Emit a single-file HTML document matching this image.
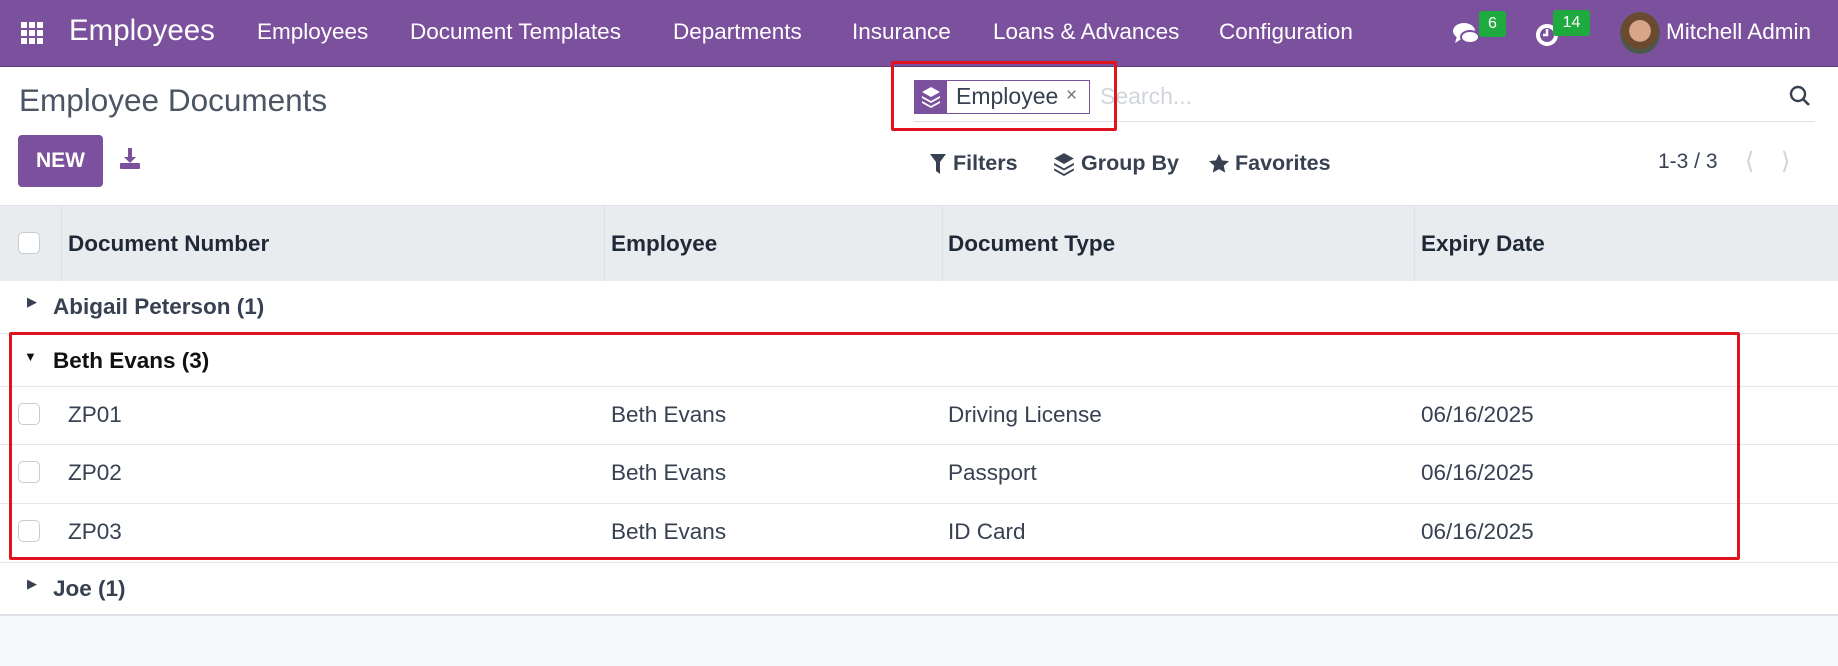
<!DOCTYPE html>
<html><head><meta charset="utf-8"><style>
*{box-sizing:border-box;margin:0;padding:0}
body{width:1838px;height:666px;overflow:hidden;background:#f8f9fa;font-family:"Liberation Sans",sans-serif;color:#374151;position:relative}
.a{position:absolute;white-space:nowrap}
.nav{position:absolute;left:0;top:0;width:1838px;height:67px;background:#7b519d;border-bottom:1px solid #5e3c7b}
.nav .a{color:#fff;font-size:22.5px;top:19px}
.ctrl{position:absolute;left:0;top:67px;width:1838px;height:138px;background:#fff}
.th{position:absolute;left:0;top:205px;width:1838px;height:76px;background:#e9ecef;border-top:1px solid #dee2e6}
.row{position:absolute;left:0;width:1838px;background:#fff;border-bottom:1px solid #e5e7eb}
.cb{position:absolute;left:18px;width:22px;height:22px;border:1px solid #c7ccd1;border-radius:5px;background:#fff}
.t{font-size:22.5px;color:#374151}
.b{font-weight:bold;color:#1f2937}
.sep{position:absolute;top:205px;width:1px;height:76px;background:#dcdfe3}
</style></head><body>
<div class="nav">
 <svg class="a" style="left:21px;top:22px" width="22" height="22" viewBox="0 0 22 22" fill="#fff"><rect x="0" y="0" width="6" height="6"/><rect x="8" y="0" width="6" height="6"/><rect x="16" y="0" width="6" height="6"/><rect x="0" y="8" width="6" height="6"/><rect x="8" y="8" width="6" height="6"/><rect x="16" y="8" width="6" height="6"/><rect x="0" y="16" width="6" height="6"/><rect x="8" y="16" width="6" height="6"/><rect x="16" y="16" width="6" height="6"/></svg>
 <div class="a" style="left:69px;top:14px;font-size:29.5px">Employees</div>
 <div class="a" style="left:257px">Employees</div>
 <div class="a" style="left:410px">Document Templates</div>
 <div class="a" style="left:673px">Departments</div>
 <div class="a" style="left:852px">Insurance</div>
 <div class="a" style="left:993px">Loans &amp; Advances</div>
 <div class="a" style="left:1219px">Configuration</div>
 <svg class="a" style="left:1452px;top:20px" width="30" height="28" viewBox="0 0 30 28" fill="#fff"><ellipse cx="12" cy="11" rx="11" ry="8"/><path d="M5 16 L3 23 L11 18Z"/><ellipse cx="18" cy="17" rx="9" ry="6" fill="#fff" stroke="#7b519d" stroke-width="2"/></svg>
 <div class="a" style="left:1479px;top:11px;width:27px;height:26px;background:#1faa3f;border-radius:3px;font-size:16px;text-align:center;line-height:26px">6</div>
 <svg class="a" style="left:1535px;top:23px" width="24" height="24" viewBox="0 0 24 24"><circle cx="12" cy="12" r="9" fill="none" stroke="#fff" stroke-width="4"/><path d="M12 6V12H8" stroke="#fff" stroke-width="2.5" fill="none"/></svg>
 <div class="a" style="left:1553px;top:10px;width:37px;height:26px;background:#1faa3f;border-radius:3px;font-size:16px;text-align:center;line-height:26px">14</div>
 <div class="a" style="left:1620px;top:12px;width:40px;height:42px;border-radius:50%;background:radial-gradient(circle at 50% 45%,#d9a58a 0 35%,#6b4a32 36% 60%,#4a5a4a 61%)"></div>
 <div class="a" style="left:1666px">Mitchell Admin</div>
</div>
<div class="ctrl">
 <div class="a" style="left:19px;top:15px;font-size:31.5px;color:#4b5563">Employee Documents</div>
 <div class="a" style="left:18px;top:68px;width:85px;height:52px;background:#7b519d;border-radius:4px;color:#fff;font-size:21px;font-weight:bold;text-align:center;line-height:52px">NEW</div>
 <svg class="a" style="left:119px;top:81px" width="22" height="22" viewBox="0 0 22 22" fill="#7b519d"><path d="M9 0h4v9h4l-6 6-6-6h4z"/><rect x="1" y="15" width="20" height="6" rx="1"/></svg>
 <div class="a" style="left:914px;top:13px;width:176px;height:34px;border:1px solid #7b519d;background:#fff"></div>
 <div class="a" style="left:914px;top:13px;width:33px;height:34px;background:#7b519d"></div>
 <svg class="a" style="left:921px;top:19px" width="20" height="22" viewBox="0 0 20 22" fill="#fff"><path d="M10 1 L19 6 L10 11 L1 6Z"/><path d="M1 10 L10 15 L19 10 V12 L10 17 L1 12Z"/><path d="M1 15 L10 20 L19 15 V17 L10 22 L1 17Z"/></svg>
 <div class="a" style="left:956px;top:16px;font-size:23px;color:#374151">Employee</div>
 <div class="a" style="left:1066px;top:18px;font-size:19px;color:#6b7280">×</div>
 <div class="a" style="left:1100px;top:16px;font-size:23px;color:#d1d5db">Search...</div>
 <div class="a" style="left:914px;top:54px;width:901px;height:1px;background:#dee2e6"></div>
 <svg class="a" style="left:1788px;top:17px" width="24" height="24" viewBox="0 0 24 24"><circle cx="10" cy="10" r="7" fill="none" stroke="#374151" stroke-width="2.4"/><path d="M15 15L21 21" stroke="#374151" stroke-width="2.6"/></svg>
 <div class="a" style="left:891px;top:-6px;width:226px;height:70px;border:3px solid #e0141e;border-radius:2px"></div>
 <svg class="a" style="left:930px;top:87px" width="16" height="20" viewBox="0 0 16 20" fill="#374151"><path d="M0 0H16L10 8V20L6 17V8Z"/></svg>
 <div class="a b" style="left:953px;top:84px;font-size:21.5px;color:#374151">Filters</div>
 <svg class="a" style="left:1053px;top:85px" width="22" height="24" viewBox="0 0 20 22" fill="#374151"><path d="M10 1 L19 6 L10 11 L1 6Z"/><path d="M1 10 L10 15 L19 10 V12 L10 17 L1 12Z"/><path d="M1 15 L10 20 L19 15 V17 L10 22 L1 17Z"/></svg>
 <div class="a b" style="left:1081px;top:84px;font-size:21.5px;color:#374151">Group By</div>
 <svg class="a" style="left:1208px;top:86px" width="22" height="22" viewBox="0 0 24 24" fill="#374151"><path d="M12 1l3.3 7 7.6.8-5.7 5.1 1.6 7.5L12 17.6 5.2 21.4l1.6-7.5L1.1 8.8l7.6-.8z"/></svg>
 <div class="a b" style="left:1235px;top:84px;font-size:21.5px;color:#374151">Favorites</div>
 <div class="a" style="left:1658px;top:83px;font-size:21px;color:#374151">1-3 / 3</div>
 <div class="a" style="left:1745px;top:80px;font-size:24px;color:#ced4da">&#10216;</div>
 <div class="a" style="left:1781px;top:80px;font-size:24px;color:#ced4da">&#10217;</div>
</div>
<div class="th">
 <div class="cb" style="top:26px"></div>
 <div class="a t b" style="left:68px;top:25px">Document Number</div>
 <div class="a t b" style="left:611px;top:25px">Employee</div>
 <div class="a t b" style="left:948px;top:25px">Document Type</div>
 <div class="a t b" style="left:1421px;top:25px">Expiry Date</div>
</div>
<div class="sep" style="left:61px"></div><div class="sep" style="left:604px"></div><div class="sep" style="left:942px"></div><div class="sep" style="left:1414px"></div>
<div class="row" style="top:281px;height:53px"><div class="a" style="left:27px;top:13px;font-size:13px;color:#374151">&#9654;</div><div class="a t b" style="left:53px;top:13px;color:#374151">Abigail Peterson (1)</div></div>
<div class="row" style="top:334px;height:53px"><div class="a" style="left:24px;top:15px;font-size:13px;color:#111">&#9660;</div><div class="a t b" style="left:53px;top:14px;color:#111">Beth Evans (3)</div></div>
<div class="row" style="top:387px;height:58px"><div class="cb" style="top:16px"></div><div class="a t" style="left:68px;top:15px">ZP01</div><div class="a t" style="left:611px;top:15px">Beth Evans</div><div class="a t" style="left:948px;top:15px">Driving License</div><div class="a t" style="left:1421px;top:15px">06/16/2025</div></div>
<div class="row" style="top:445px;height:59px"><div class="cb" style="top:16px"></div><div class="a t" style="left:68px;top:15px">ZP02</div><div class="a t" style="left:611px;top:15px">Beth Evans</div><div class="a t" style="left:948px;top:15px">Passport</div><div class="a t" style="left:1421px;top:15px">06/16/2025</div></div>
<div class="row" style="top:504px;height:59px"><div class="cb" style="top:16px"></div><div class="a t" style="left:68px;top:15px">ZP03</div><div class="a t" style="left:611px;top:15px">Beth Evans</div><div class="a t" style="left:948px;top:15px">ID Card</div><div class="a t" style="left:1421px;top:15px">06/16/2025</div></div>
<div class="row" style="top:563px;height:53px;border-bottom:2px solid #dee2e6"><div class="a" style="left:27px;top:13px;font-size:13px;color:#374151">&#9654;</div><div class="a t b" style="left:53px;top:13px;color:#374151">Joe (1)</div></div>
<div class="a" style="left:9px;top:332px;width:1731px;height:228px;border:3px solid #e0141e;border-radius:2px"></div>
</body></html>
